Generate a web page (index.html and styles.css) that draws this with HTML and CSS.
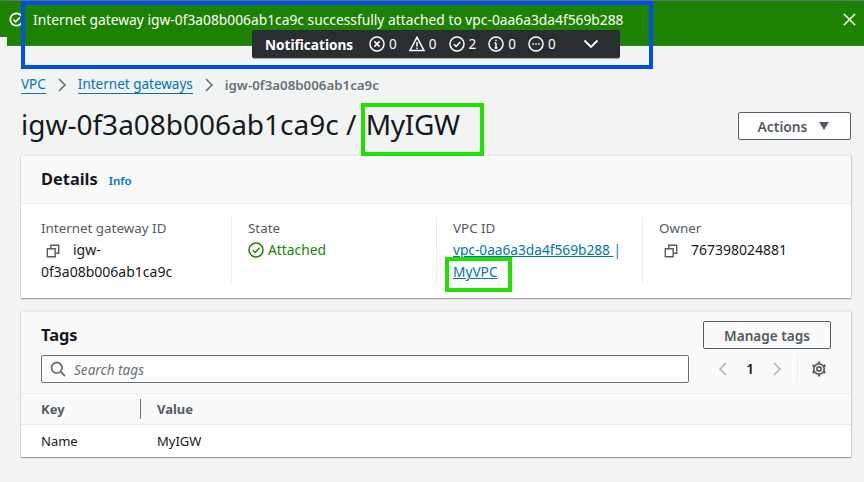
FILE: index.html
```html
<!DOCTYPE html>
<html lang="en">
<head>
<meta charset="utf-8">
<title>Internet gateway</title>
<link rel="stylesheet" href="styles.css">
</head>
<body>
<div class="page">
  <header class="flash">
    <div class="flash-main">
      <svg class="flash-icon" viewBox="0 0 16 16"><circle cx="8" cy="8" r="6.6"/><path d="M4.8 8.2l2.3 2.3 4.3-4.6"/></svg>
      <span class="flash-text">Internet gateway igw-0f3a08b006ab1ca9c successfully attached to vpc-0aa6a3da4f569b288</span>
      <svg class="flash-close" viewBox="0 0 16 16"><path d="M2 2l12 12M14 2L2 14"/></svg>
    </div>
    <div class="flash-under"></div>
  </header>

  <div class="notify">
    <strong class="notify-title">Notifications</strong>
    <span class="notify-item"><svg viewBox="0 0 16 16"><circle cx="8" cy="8" r="7"/><path d="M5.4 5.4l5.2 5.2M10.6 5.4l-5.2 5.2"/></svg>0</span>
    <span class="notify-item"><svg viewBox="0 0 16 16"><path d="M8 1.3L15 14.5H1z"/><path d="M8 6v4.6M8 11.6v1.4"/></svg>0</span>
    <span class="notify-item"><svg viewBox="0 0 16 16"><circle cx="8" cy="8" r="7"/><path d="M4.8 8.2l2.3 2.3 4.2-4.5"/></svg>2</span>
    <span class="notify-item"><svg viewBox="0 0 16 16"><circle cx="8" cy="8" r="7"/><path d="M8 7v5M6.5 12h3M6.5 7H8M8 3.8v1.5"/></svg>0</span>
    <span class="notify-item"><svg viewBox="0 0 16 16"><circle cx="8" cy="8" r="7"/><path d="M4.2 8h1.6M7.2 8h1.6M10.2 8h1.6"/></svg>0</span>
    <svg class="notify-caret" viewBox="0 0 16 10"><path d="M1.5 1.5L8 8l6.5-6.5"/></svg>
  </div>

  <main class="content">
    <nav class="crumbs">
      <a href="#">VPC</a>
      <svg viewBox="0 0 10 16"><path d="M2 2l6 6-6 6"/></svg>
      <a href="#">Internet gateways</a>
      <svg viewBox="0 0 10 16"><path d="M2 2l6 6-6 6"/></svg>
      <span class="crumb-current">igw-0f3a08b006ab1ca9c</span>
    </nav>

    <div class="title-row">
      <h1>igw-0f3a08b006ab1ca9c / <span class="title-name">MyIGW</span></h1>
      <button class="btn btn-actions">Actions <svg viewBox="0 0 12 10"><path d="M1 1h10L6 9z"/></svg></button>
    </div>

    <section class="card details">
      <div class="card-head">
        <h2>Details</h2>
        <a class="info" href="#">Info</a>
      </div>
      <div class="cols">
        <div class="col">
          <div class="label">Internet gateway ID</div>
          <div class="value"><svg class="copy" viewBox="0 0 16 16"><path d="M5.5 4.5V1.5h9v9h-3"/><path d="M1.5 5.500h9v9h-9z"/></svg><span class="copy-text">igw-</span><br>0f3a08b006ab1ca9c</div>
        </div>
        <div class="col">
          <div class="label">State</div>
          <div class="value status"><svg viewBox="0 0 16 16"><circle cx="8" cy="8" r="7"/><path d="M4.8 8.2l2.3 2.3 4.2-4.5"/></svg>Attached</div>
        </div>
        <div class="col">
          <div class="label">VPC ID</div>
          <div class="value link-value"><a href="#">vpc-0aa6a3da4f569b288 </a> | <a href="#">MyVPC</a></div>
        </div>
        <div class="col">
          <div class="label">Owner</div>
          <div class="value"><svg class="copy" viewBox="0 0 16 16"><path d="M5.5 4.5V1.5h9v9h-3"/><path d="M1.5 5.500h9v9h-9z"/></svg><span class="copy-text">767398024881</span></div>
        </div>
      </div>
    </section>

    <section class="card tags">
      <div class="tags-head">
        <div class="tags-title">
          <h2>Tags</h2>
          <button class="btn btn-manage">Manage tags</button>
        </div>
        <div class="tags-tools">
          <div class="search">
            <svg viewBox="0 0 16 16"><circle cx="6.8" cy="6.8" r="5.3"/><path d="M10.6 10.6l4.4 4.4"/></svg>
            <span>Search tags</span>
          </div>
          <div class="pager">
            <svg class="pg" viewBox="0 0 10 16"><path d="M8 2L2 8l6 6"/></svg>
            <span class="pg-num">1</span>
            <svg class="pg" viewBox="0 0 10 16"><path d="M2 2l6 6-6 6"/></svg>
          </div>
          <div class="gear-wrap">
            <svg class="gear" viewBox="0 0 16 16"><circle cx="8" cy="8" r="5.200" class="gear-ring"/><circle cx="8" cy="8" r="2.100"/><path class="gear-teeth" d="M8 .6v2M8 13.400v2M1.600 4.300l1.700 1M12.700 10.700l1.700 1M1.600 11.700l1.700-1M12.700 5.300l1.700-1"/></svg>
          </div>
        </div>
      </div>
      <div class="thead">
        <div class="th th-key">Key</div>
        <div class="th th-val">Value</div>
      </div>
      <div class="trow">
        <div class="td-key">Name</div>
        <div class="td-val">MyIGW</div>
      </div>
    </section>
  </main>

  <div class="mark mark-blue"></div>
  <div class="mark mark-title"></div>
  <div class="mark mark-vpc"></div>
</div>
</body>
</html>
```
FILE: styles.css
```css
* { box-sizing: border-box; }
html, body { margin: 0; padding: 0; }
body { background: #f2f3f3; font-family: "Noto Sans", "Open Sans", sans-serif; font-size: 13px; color: #16191f; }
svg { fill: none; stroke: currentColor; stroke-width: 1.8; display: block; flex: none; }
a { color: #0073bb; }
h1, h2 { margin: 0; }

.page { position: relative; width: 864px; height: 482px; overflow: hidden; }

.flash { border-top: 1px solid #687078; }
.flash-main { height: 36px; background: #1d8102; color: #fff; display: flex; align-items: center; padding: 0 7px 0 9px; }
.flash-icon { width: 15px; height: 15px; margin-right: 9px; }
.flash-text { flex: 1; font-size: 13.8px; position: relative; top: 0; }
.flash-close { width: 15px; height: 15px; stroke-width: 1.6; stroke: #e6efe3; }
.flash-under { height: 8px; margin-left: 7px; background: #1d8102; box-shadow: 0 1px 0 #2a8a10; }

.notify { position: absolute; left: 252px; top: 30px; width: 368px; height: 28px; background: #2a2e33; border-radius: 2px; box-shadow: 0 1px 1px rgba(0,0,0,.3); color: #fff; display: flex; align-items: center; padding: 0 13px; }
.notify-title { font-size: 13.6px; font-weight: 700; margin-right: 16px; }
.notify-item { display: flex; align-items: center; gap: 4px; font-size: 13.5px; margin-right: 12px; }
.notify-item svg { width: 16px; height: 16px; stroke-width: 1.5; }
.notify-caret { width: 16px; height: 10px; margin-left: 15px; stroke-width: 1.8; }

.content { padding: 0 13px 0 21px; }

.crumbs { display: flex; align-items: center; height: 22px; margin-top: 29px; font-size: 13.5px; }
.crumbs a { color: #0073bb; text-decoration: none; border-bottom: 1px solid #0073bb; line-height: 17px; }
.crumbs svg { width: 10px; height: 16px; margin: 0 11px; color: #687078; stroke-width: 1.6; }
.crumb-current { color: #687078; font-weight: 600; font-size: 13.3px; }

.title-row { display: flex; align-items: center; justify-content: space-between; height: 44px; margin-top: 7px; margin-bottom: 8px; }
h1 { font-size: 28px; font-weight: 400; line-height: 36px; position: relative; top: -1px; }
.title-name { letter-spacing: -0.3px; margin-left: 2px; }

.btn { font-family: inherit; font-weight: 600; color: #545b64; background: #fff; border: 1px solid #545b64; border-radius: 2px; display: flex; align-items: center; justify-content: center; padding: 0; }
.btn-actions { width: 113px; height: 28px; font-size: 13.8px; gap: 10px; position: relative; top: 1px; }
.btn-actions svg { width: 14px; height: 10px; fill: #545b64; stroke: none; }
.btn-manage { width: 128px; height: 28px; font-size: 13.6px; background: #fafafa; }

.card { background: #fff; box-shadow: 0 1px 1px rgba(0,24,40,.35), 1px 0 1px rgba(0,24,40,.1), -1px 0 1px rgba(0,24,40,.05); border-top: 1px solid #eaeded; }
.details { height: 143px; margin-bottom: 13px; }
.card-head { height: 48px; background: #fafafa; border-bottom: 1px solid #eaeded; display: flex; align-items: center; padding: 0 20px 2px; gap: 11px; }
h2 { font-size: 16.4px; font-weight: 700; color: #16191f; }
.info { font-size: 11.5px; font-weight: 600; text-decoration: none; color: #0073bb; margin-top: 3px; }

.cols { display: flex; padding: 13px 0 0 20px; }
.col { flex: none; height: 66px; border-right: 1px solid #eaeded; margin-right: 16px; line-height: 22px; }
.col:nth-child(1) { width: 191px; padding-right: 10px; }
.col:nth-child(2) { width: 189px; padding-right: 16px; }
.col:nth-child(3) { width: 190px; padding-right: 8px; }
.col:last-child { border-right: 0; margin-right: 0; width: 172px; }
.label { color: #545b64; font-size: 13.4px; }
.value { color: #16191f; font-size: 14px; }
.copy { display: inline-block; vertical-align: -3px; width: 14px; height: 14px; margin: 0 13px 0 5px; color: #545b64; stroke-width: 1.6; }
.status { display: flex; align-items: center; color: #1d8102; gap: 4px; font-size: 13.8px; }
.status svg { width: 16px; height: 16px; stroke-width: 1.5; }
.link-value { color: #0073bb; font-size: 13.7px; }
.link-value a { color: #0073bb; }

.tags { height: 146px; }
.tags-head { height: 82px; background: #fafafa; padding: 9px 20px 0; border-bottom: 1px solid #eaeded; }
.tags-title { display: flex; align-items: center; justify-content: space-between; height: 28px; }
.tags-title h2 { position: relative; top: -1px; }
.tags-tools { display: flex; align-items: center; margin-top: 6px; height: 28px; }
.search { flex: none; width: 648px; height: 28px; background: #fff; border: 1px solid #687078; border-radius: 2px; display: flex; align-items: center; padding-left: 8px; gap: 8px; color: #687078; font-style: italic; font-size: 13.6px; }
.search svg { width: 16px; height: 16px; color: #687078; }
.pager { flex: none; display: flex; align-items: center; margin-left: 29px; height: 28px; width: 79px; }
.pg { width: 10px; height: 16px; color: #aab7b8; stroke-width: 1.6; }
.pg-num { font-size: 13.5px; font-weight: 600; width: 44px; text-align: center; color: #16191f; }
.gear-wrap { border-left: 1px solid #eaeded; height: 28px; display: flex; align-items: center; padding-left: 13px; }
.gear { width: 16px; height: 16px; color: #545b64; stroke-width: 1.7; }
.gear-teeth { stroke-width: 2.2; }

.thead { display: flex; align-items: center; height: 31px; background: #fafafa; border-bottom: 1px solid #eaeded; padding-left: 20px; font-weight: 700; color: #545b64; font-size: 13px; }
.th-key { width: 100px; height: 20px; border-right: 1px solid #687078; line-height: 20px; }
.th-val { padding-left: 16px; }
.trow { display: flex; align-items: center; height: 32px; padding-left: 20px; font-size: 13px; }
.td-key { width: 116px; }

.mark { position: absolute; border-style: solid; pointer-events: none; }
.mark-blue { left: 21px; top: 1px; width: 632px; height: 68px; border-width: 4px; border-color: #0050e6; }
.mark-title { left: 361px; top: 103px; width: 123px; height: 53px; border-width: 4px; border-color: #22e000; }
.mark-vpc { left: 445px; top: 257px; width: 67px; height: 35px; border-width: 4px; border-color: #22e000; }
```
